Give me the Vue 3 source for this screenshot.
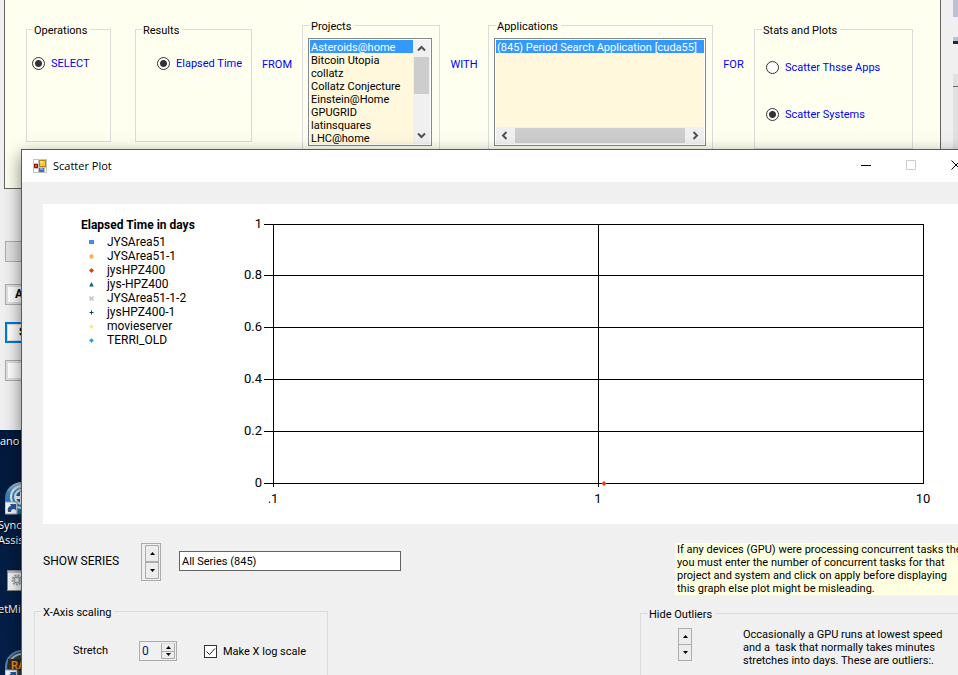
<script setup>
import { ref } from 'vue'

const projects = ['Asteroids@home', 'Bitcoin Utopia', 'collatz', 'Collatz Conjecture', 'Einstein@Home', 'GPUGRID', 'latinsquares', 'LHC@home']
const project = ref(projects[0])
const apps = ['(845) Period Search Application [cuda55]']
const app = ref(apps[0])
const target = ref('systems')
const series = ref('All Series (845)')
const stretch = ref('0')
const logX = ref(true)

const legend = [
  { name: 'JYSArea51', color: '#418cf0', d: 'M3 3h5v4h-5z' },
  { name: 'JYSArea51-1', color: '#fcb441', d: 'M3.300 5.500a2.200 2.200 0 1 0 4.400 0a2.200 2.200 0 1 0 -4.400 0z' },
  { name: 'jysHPZ400', color: '#e0400a', d: 'M5.500 3l2.500 2.500l-2.500 2.500l-2.500 -2.500z' },
  { name: 'jys-HPZ400', color: '#056492', d: 'M5.500 3l2.300 4.500h-4.600z' },
  { name: 'JYSArea51-1-2', color: '#bfbfbf', d: 'M3 4l1-1l1.500 1.500l1.500-1.500l1 1l-1.500 1.500l1.500 1.500l-1 1l-1.500-1.500l-1.500 1.500l-1-1l1.500-1.500z' },
  { name: 'jysHPZ400-1', color: '#1a3b69', d: 'M5 3.500h1v1.500h1.500v1h-1.500v1.500h-1v-1.500h-1.500v-1h1.500z' },
  { name: 'movieserver', color: '#ffe382', d: 'M5.500 3l.8 1.800h1.700l-1.300 1.200l.6 2l-1.800-1.200l-1.800 1.200l.6-2l-1.300-1.200h1.700z' },
  { name: 'TERRI_OLD', color: '#129cdd', d: 'M5 3.500h1l.5 1l1 .5v1l-1 .5l-.5 1h-1l-.5-1l-1-.5v-1l1-.5z' }
]

const yTicks = [
  { label: '1', y: 20 },
  { label: '0.8', y: 71 },
  { label: '0.6', y: 123 },
  { label: '0.4', y: 175 },
  { label: '0.2', y: 227 },
  { label: '0', y: 279 }
]
const xTicks = [
  { label: '.1', x: 40 },
  { label: '1', x: 365 },
  { label: '10', x: 690 }
]
</script>

<template>
  <div class="desktop">
    <div class="shortcuts">
      <span class="caption first">ano</span>
      <svg class="assistant" width="34" height="34" viewBox="0 0 34 34">
        <defs>
          <linearGradient id="orb" x1="0" y1="0" x2="0" y2="1">
            <stop offset="0" stop-color="#a9c3d8" />
            <stop offset=".35" stop-color="#3f82b4" />
            <stop offset="1" stop-color="#0a78b4" />
          </linearGradient>
        </defs>
        <path d="M0 32V16A17 16 0 0 1 34 16V32z" fill="url(#orb)" />
        <circle cx="17" cy="15" r="11" fill="none" stroke="#dcebf5" stroke-width="2" />
        <circle cx="17" cy="15" r="7" fill="#1a6ea8" stroke="#e8f3fa" stroke-width="2" />
        <path d="M11 14h4v-4h3v4h4v3h-4v4h-3v-4h-4z" fill="#fff" />
        <rect x="0" y="20" width="12" height="12" fill="#f4f6f8" stroke="#9aa3ad" />
        <path d="M3 30c-1-4 1-6 3-6l-1-2h6v6l-2-1c-2 0-3 1-3 3z" fill="#2b5797" />
      </svg>
      <span class="caption two">Syno<br>Assis</span>
      <svg class="gearbox" width="24" height="21" viewBox="0 0 24 21">
        <rect x=".5" y=".5" width="23" height="20" fill="#f3f3f3" stroke="#888" />
        <rect x="1" y="1" width="23" height="2" fill="#b8bec4" />
        <circle cx="10" cy="10" r="4.500" fill="none" stroke="#9aa2aa" stroke-width="2" stroke-dasharray="2 1" />
        <circle cx="10" cy="10" r="3" fill="#d5d9dd" stroke="#8a929a" />
        <circle cx="10" cy="10" r="1" fill="#fff" />
      </svg>
      <span class="caption three">etMin</span>
      <svg class="raid" width="34" height="34" viewBox="0 0 34 34">
        <circle cx="17" cy="17" r="16" fill="#2b3138" stroke="#4d84b3" stroke-width="2" />
        <circle cx="17" cy="17" r="13" fill="#343a40" stroke="#a8b4be" stroke-width="2" />
        <rect x="3" y="9" width="28" height="12" fill="#33291f" />
        <text x="6" y="19" font-size="11" font-weight="bold" fill="#e88a1c">RA</text>
        <rect x="0" y="20" width="12" height="12" fill="#f4f6f8" stroke="#9aa3ad" />
        <path d="M3 30c-1-4 1-6 3-6l-1-2h6v6l-2-1c-2 0-3 1-3 3z" fill="#2b5797" />
      </svg>
    </div>

    <div class="backdrop">
      <main class="app">
        <form class="query" @submit.prevent>
          <fieldset class="group ops">
            <legend>Operations</legend>
            <label class="choice"><input type="radio" name="op" checked>SELECT</label>
          </fieldset>
          <fieldset class="group results">
            <legend>Results</legend>
            <label class="choice"><input type="radio" name="result" checked>Elapsed Time</label>
          </fieldset>
          <span class="word from">FROM</span>
          <fieldset class="group projects">
            <legend>Projects</legend>
            <div class="listbox">
              <select v-model="project" size="8" aria-label="Projects">
                <option v-for="p in projects" :key="p" :value="p">{{ p }}</option>
              </select>
              <div class="vscroll">
                <button type="button" aria-label="Scroll up"><svg width="9" height="7" viewBox="0 0 9 7"><path d="M1 5.500L4.500 2L8 5.500" /></svg></button>
                <span class="thumb"></span>
                <button type="button" aria-label="Scroll down"><svg width="9" height="7" viewBox="0 0 9 7"><path d="M1 1.500L4.500 5L8 1.500" /></svg></button>
              </div>
            </div>
          </fieldset>
          <span class="word with">WITH</span>
          <fieldset class="group applications">
            <legend>Applications</legend>
            <div class="listbox stacked">
              <select v-model="app" size="6" aria-label="Applications">
                <option v-for="a in apps" :key="a" :value="a">{{ a }}</option>
              </select>
              <div class="hscroll">
                <button type="button" aria-label="Scroll left"><svg width="7" height="9" viewBox="0 0 7 9"><path d="M5.500 1L2 4.500L5.500 8" /></svg></button>
                <span class="thumb"></span>
                <button type="button" aria-label="Scroll right"><svg width="7" height="9" viewBox="0 0 7 9"><path d="M1.500 1L5 4.500L1.500 8" /></svg></button>
              </div>
            </div>
          </fieldset>
          <span class="word for">FOR</span>
          <fieldset class="group stats">
            <legend>Stats and Plots</legend>
            <label class="choice"><input v-model="target" type="radio" name="target" value="apps">Scatter Thsse Apps</label>
            <label class="choice"><input v-model="target" type="radio" name="target" value="systems">Scatter Systems</label>
          </fieldset>
        </form>
        <div class="side">
          <button type="button" class="disabled" aria-label="Action"></button>
          <button type="button">A</button>
          <button type="button" class="focused">S</button>
          <button type="button" aria-label="Action"></button>
        </div>
      </main>
      <div class="neighbor">
        <span class="n1"></span><span class="n2"></span><span class="n3"></span><span class="n4"></span><span class="n5"></span><span class="n6"></span>
      </div>
    </div>

    <section class="window">
      <header class="titlebar">
        <svg width="14" height="14" viewBox="0 0 14 14">
          <rect width="14" height="14" fill="#c4c4c4" />
          <rect x="1" y="1" width="4" height="3" fill="#fff" />
          <rect x="1" y="10" width="4" height="3" fill="#fff" />
          <rect x="12" y="9" width="1" height="4" fill="#fff" />
          <rect x="6" y="1" width="7" height="7" fill="#b8860b" />
          <rect x="7" y="2" width="5" height="5" fill="#ffc928" />
          <rect x="7" y="2" width="3" height="2" fill="#ffe27a" />
          <rect x="1" y="5" width="4" height="4" fill="#a01010" />
          <rect x="2" y="6" width="2" height="2" fill="#e05038" />
          <rect x="6" y="9" width="5" height="4" fill="#3a6cc8" />
          <rect x="7" y="9" width="3" height="2" fill="#78a8f0" />
        </svg>
        <h1>Scatter Plot</h1>
        <button type="button" aria-label="Minimize"><svg width="11" height="11" viewBox="0 0 11 11"><path d="M0 5.500h10" stroke="#000" /></svg></button>
        <button type="button" aria-label="Maximize" disabled><svg width="11" height="11" viewBox="0 0 11 11"><path d="M.5 .5h9v9h-9z" stroke="#ccc" /></svg></button>
        <button type="button" aria-label="Close"><svg width="11" height="11" viewBox="0 0 11 11"><path d="M.5 .5l9 9M9.500 .5l-9 9" stroke="#000" /></svg></button>
      </header>

      <div class="chart">
        <div class="legend">
          <h2>Elapsed Time in days</h2>
          <ul>
            <li v-for="s in legend" :key="s.name">
              <svg width="11" height="11" viewBox="0 0 11 11"><path :d="s.d" :fill="s.color" /></svg>{{ s.name }}
            </li>
          </ul>
        </div>
        <svg class="plot" viewBox="0 0 710 320">
          <g stroke="#000" shape-rendering="crispEdges">
            <line v-for="t in yTicks" :key="t.label" x1="31" x2="691" :y1="t.y + 0.5" :y2="t.y + 0.5" />
            <line v-for="t in xTicks" :key="t.label" :x1="t.x + 0.5" :x2="t.x + 0.5" y1="20" :y2="t.x > 600 ? 280 : 283" />
          </g>
          <text v-for="t in yTicks" :key="t.label" x="29" :y="t.y + 4" text-anchor="end">{{ t.label }}</text>
          <text v-for="t in xTicks" :key="t.label" :x="t.x" y="299" text-anchor="middle">{{ t.label }}</text>
          <path d="M371 277l2.500 2.500l-2.500 2.500l-2.500-2.500z" fill="#e0400a" />
        </svg>
      </div>

      <div class="series">
        <label for="series">SHOW SERIES</label>
        <div class="spin framed">
          <button type="button" aria-label="Previous series"><svg width="5" height="3" viewBox="0 0 5 3"><path d="M0 3h5L2.500 0z" /></svg></button>
          <button type="button" aria-label="Next series"><svg width="5" height="3" viewBox="0 0 5 3"><path d="M0 0h5L2.500 3z" /></svg></button>
        </div>
        <input id="series" v-model="series" type="text">
        <p class="note">If any devices (GPU) were processing concurrent tasks then<br>you must enter the number of concurrent tasks for that<br>project and system and click on apply before displaying<br>this graph else plot might be misleading.</p>
      </div>

      <div class="options">
        <fieldset class="group xaxis">
          <legend>X-Axis scaling</legend>
          <div class="fields">
            <label for="stretch">Stretch</label>
            <div class="number">
              <input id="stretch" v-model="stretch" type="text">
              <div class="spin small">
                <button type="button" aria-label="Increase"><svg width="5" height="3" viewBox="0 0 5 3"><path d="M0 3h5L2.500 0z" /></svg></button>
                <button type="button" aria-label="Decrease"><svg width="5" height="3" viewBox="0 0 5 3"><path d="M0 0h5L2.500 3z" /></svg></button>
              </div>
            </div>
            <label class="check">
              <span class="tick">
                <input v-model="logX" type="checkbox">
                <svg v-if="logX" width="13" height="13" viewBox="0 0 13 13"><path d="M2.500 6.500l3 3l5.500-6" /></svg>
              </span>Make X log scale
            </label>
          </div>
        </fieldset>
        <fieldset class="group outliers">
          <legend>Hide Outliers</legend>
          <div class="hide">
            <div class="spin">
              <button type="button" aria-label="Hide more"><svg width="5" height="3" viewBox="0 0 5 3"><path d="M0 3h5L2.500 0z" /></svg></button>
              <button type="button" aria-label="Hide fewer"><svg width="5" height="3" viewBox="0 0 5 3"><path d="M0 0h5L2.500 3z" /></svg></button>
            </div>
            <p>Occasionally a GPU runs at lowest speed<br>and a&nbsp; task that normally takes minutes<br>stretches into days. These are outliers:.</p>
          </div>
        </fieldset>
      </div>
    </section>
  </div>
</template>

<style>
body { margin: 0; }
</style>

<style scoped>
.desktop {
  position: relative;
  height: 100vh;
  overflow: hidden;
  background: linear-gradient(#020f26, #04204a);
  color: #000;
  font: 11px/13px Roboto, "Liberation Sans", sans-serif;
}
.desktop *, .desktop *::before { box-sizing: border-box; }
button, input, select { margin: 0; padding: 0; border: 0; border-radius: 0; font: inherit; color: inherit; }
button { display: flex; align-items: center; justify-content: center; background: none; }
h1, h2, p, ul { margin: 0; padding: 0; list-style: none; }

/* desktop shortcuts */
.shortcuts > * { position: absolute; }
.caption { color: #fff; font: 11px/15px "Open Sans", sans-serif; text-shadow: 1px 1px 1px #000; }
.first { left: 0; top: 433px; }
.assistant { left: 5px; top: 482px; }
.two { left: -2px; top: 517px; }
.gearbox { left: 7px; top: 570px; }
.three { left: -2px; top: 601px; }
.raid { left: 5px; top: 650px; }

/* main application behind the plot window */
.backdrop { position: absolute; top: 0; left: 0; right: 0; height: 430px; display: flex; background: #f0f0f0; }
.app { flex: 1; min-width: 0; padding: 0 12px 0 4px; }
.query {
  display: flex;
  align-items: flex-start;
  height: 189px;
  padding: 19px 0 0 21px;
  border: solid #646464;
  border-width: 0 1px 1px;
  background: #fffff0;
  overflow: hidden;
}
.group { flex: none; margin: 0; padding: 0; border: 1px solid #dcdcdc; min-width: 0; }
.group legend { height: 13px; margin-left: 6px; padding: 0 3px 0 1px; line-height: 15px; white-space: nowrap; }
.choice { display: flex; align-items: center; gap: 6px; height: 14px; color: #0000ff; white-space: nowrap; }
.choice input {
  appearance: none;
  flex: none;
  width: 13px;
  height: 13px;
  border: 1px solid #333;
  border-radius: 50%;
  background: #fff;
}
.choice input:checked { background: radial-gradient(circle, #333 3px, #fff 4px); }
.ops { width: 85px; height: 119px; margin: 4px 24px 0 0; }
.results { width: 117px; height: 119px; margin-top: 4px; }
.ops .choice { margin: 20px 0 0 5px; }
.results .choice { margin: 20px 0 0 21px; }
.word { flex: none; margin-top: 39px; color: #0000ff; text-align: center; }
.from { width: 50px; }
.with { width: 48px; }
.for { width: 41px; }
.projects { width: 138px; height: 140px; }
.applications { width: 225px; height: 140px; }
.projects legend, .applications legend, .stats legend { margin-left: 7px; }
.stats { width: 159px; height: 126px; margin-top: 4px; }
.stats .choice { margin: 24px 0 33px 11px; }
.stats .choice + .choice { margin-top: 0; }

.listbox {
  display: flex;
  height: 108px;
  margin: 6px 6px 0 5px;
  padding: 1px;
  border: 1px solid #828790;
  background: #fff;
}
.projects .listbox { margin-right: 7px; }
.stacked { flex-direction: column; }
.listbox select {
  flex: 1;
  min-width: 0;
  min-height: 0;
  background: #fff8dc;
  outline: 0;
  overflow: hidden;
  scrollbar-width: none;
}
.listbox option { min-height: 13px; height: 13px; padding: 1px 1px 0; line-height: 13px; color: #000; }
.listbox option:checked { background: #3399ff linear-gradient(#3399ff, #3399ff); color: #fff; }
.vscroll { flex: none; display: flex; flex-direction: column; width: 17px; background: #f0f0f0; }
.hscroll { flex: none; display: flex; height: 17px; background: #f0f0f0; }
.vscroll button { height: 17px; }
.hscroll button { width: 17px; }
.vscroll .thumb { height: 37px; margin: 0 1px auto; background: #cdcdcd; }
.hscroll .thumb { flex: 1; margin: 1px 2px; background: #cdcdcd; }
.listbox svg { fill: none; stroke: #505050; stroke-width: 2; }

.side { display: flex; flex-direction: column; gap: 17px; padding: 52px 0 0 1px; }
.side button {
  width: 60px;
  height: 21px;
  padding-left: 9px;
  justify-content: flex-start;
  border: 1px solid #adadad;
  box-shadow: inset 0 0 0 2px #e1e1e1;
  background: #fff;
  font-size: 12px;
  font-weight: bold;
}
.side .disabled { background: #e1e1e1; margin-bottom: 5px; }
.side .focused { padding-left: 12px; border: 2px solid #0078d7; box-shadow: inset 0 0 0 1px #e1e1e1; }

.neighbor { flex: none; display: flex; flex-direction: column; width: 5px; background: #e1e1e1; }
.n1 { height: 17px; background: #b9c1d5; }
.n2 { height: 20px; background: #f0f0f0; }
.n3 { height: 4px; background: #b9c1d5; }
.n4 { height: 3px; background: #1c2a44; }
.n5 { height: 30px; background: #f0f0f0; }
.n6 { height: 13px; border-bottom: 1px solid #646464; }

/* plot window */
.window {
  position: absolute;
  top: 149px;
  left: 21px;
  right: -22px;
  bottom: -40px;
  border: 1px solid #5a5a5a;
  background: #f0f0f0;
  box-shadow: 0 6px 16px rgba(0, 0, 0, .5);
}
.titlebar { display: flex; align-items: center; height: 32px; padding-left: 11px; background: #fff; }
.titlebar h1 { flex: 1; margin-left: 6px; font: 11px/16px "Open Sans", sans-serif; }
.titlebar button { width: 45px; height: 32px; padding-bottom: 1px; }
.titlebar button svg { fill: none; }
.chart { display: flex; margin: 22px 21px 0; background: #fff; }
.legend { flex: none; width: 190px; padding: 12px 0 0 38px; }
.legend h2 { font-size: 12px; line-height: 19px; }
.legend li { display: flex; align-items: center; gap: 10px; height: 14px; padding-left: 5px; font-size: 12px; }
.plot { flex: 1; min-width: 0; margin-right: 15px; font-size: 13px; }

.series { display: flex; align-items: flex-start; margin: 19px 0 0 21px; }
.series label { width: 98px; margin-top: 12px; font-size: 12px; }
.spin { flex: none; display: flex; flex-direction: column; width: 14px; }
.spin button { height: 17px; border: 1px solid #acacac; background: #ececec; }
.spin button + button { margin-top: -1px; }
.framed { width: 20px; height: 38px; padding: 1px 1px 1px 3px; border: 1px solid #acacac; }
.framed button + button { margin-top: 0; }
.series input {
  flex: none;
  width: 222px;
  height: 20px;
  margin: 8px 0 0 18px;
  padding: 0 2px;
  border: 1px solid #646464;
  background: #fff;
}
.note { flex: 1; margin-left: 274px; padding-left: 2px; background: #ffffe1; white-space: nowrap; overflow: hidden; }

.options { display: flex; justify-content: space-between; margin: 10px 0 0 12px; }
.xaxis { width: 294px; height: 120px; }
.xaxis legend, .outliers legend { margin-left: 7px; }
.fields { display: flex; align-items: flex-start; margin: 23px 0 0 38px; }
.fields > label { margin-top: 3px; width: 66px; }
.number { display: flex; width: 38px; height: 20px; padding: 1px; border: 1px solid #acacac; }
.number input { flex: 1; width: 0; height: 16px; padding: 0 1px; background: transparent; color: #00207a; font-size: 12px; }
.small button { height: 9px; border-top-color: #dcdcdc; }
.small button + button { border-top-color: #acacac; }
.fields .check { display: flex; align-items: center; gap: 6px; width: auto; margin: 4px 0 0 27px; white-space: nowrap; }
.tick { display: grid; }
.tick > * { grid-area: 1 / 1; }
.tick input { appearance: none; width: 13px; height: 13px; border: 1px solid #333; background: #fff; }
.tick svg { fill: none; stroke: #222; stroke-width: 1; pointer-events: none; }
.outliers { width: 339px; height: 120px; margin-top: 2px; }
.hide { display: flex; gap: 51px; margin: 8px 0 0 37px; white-space: nowrap; }
</style>
